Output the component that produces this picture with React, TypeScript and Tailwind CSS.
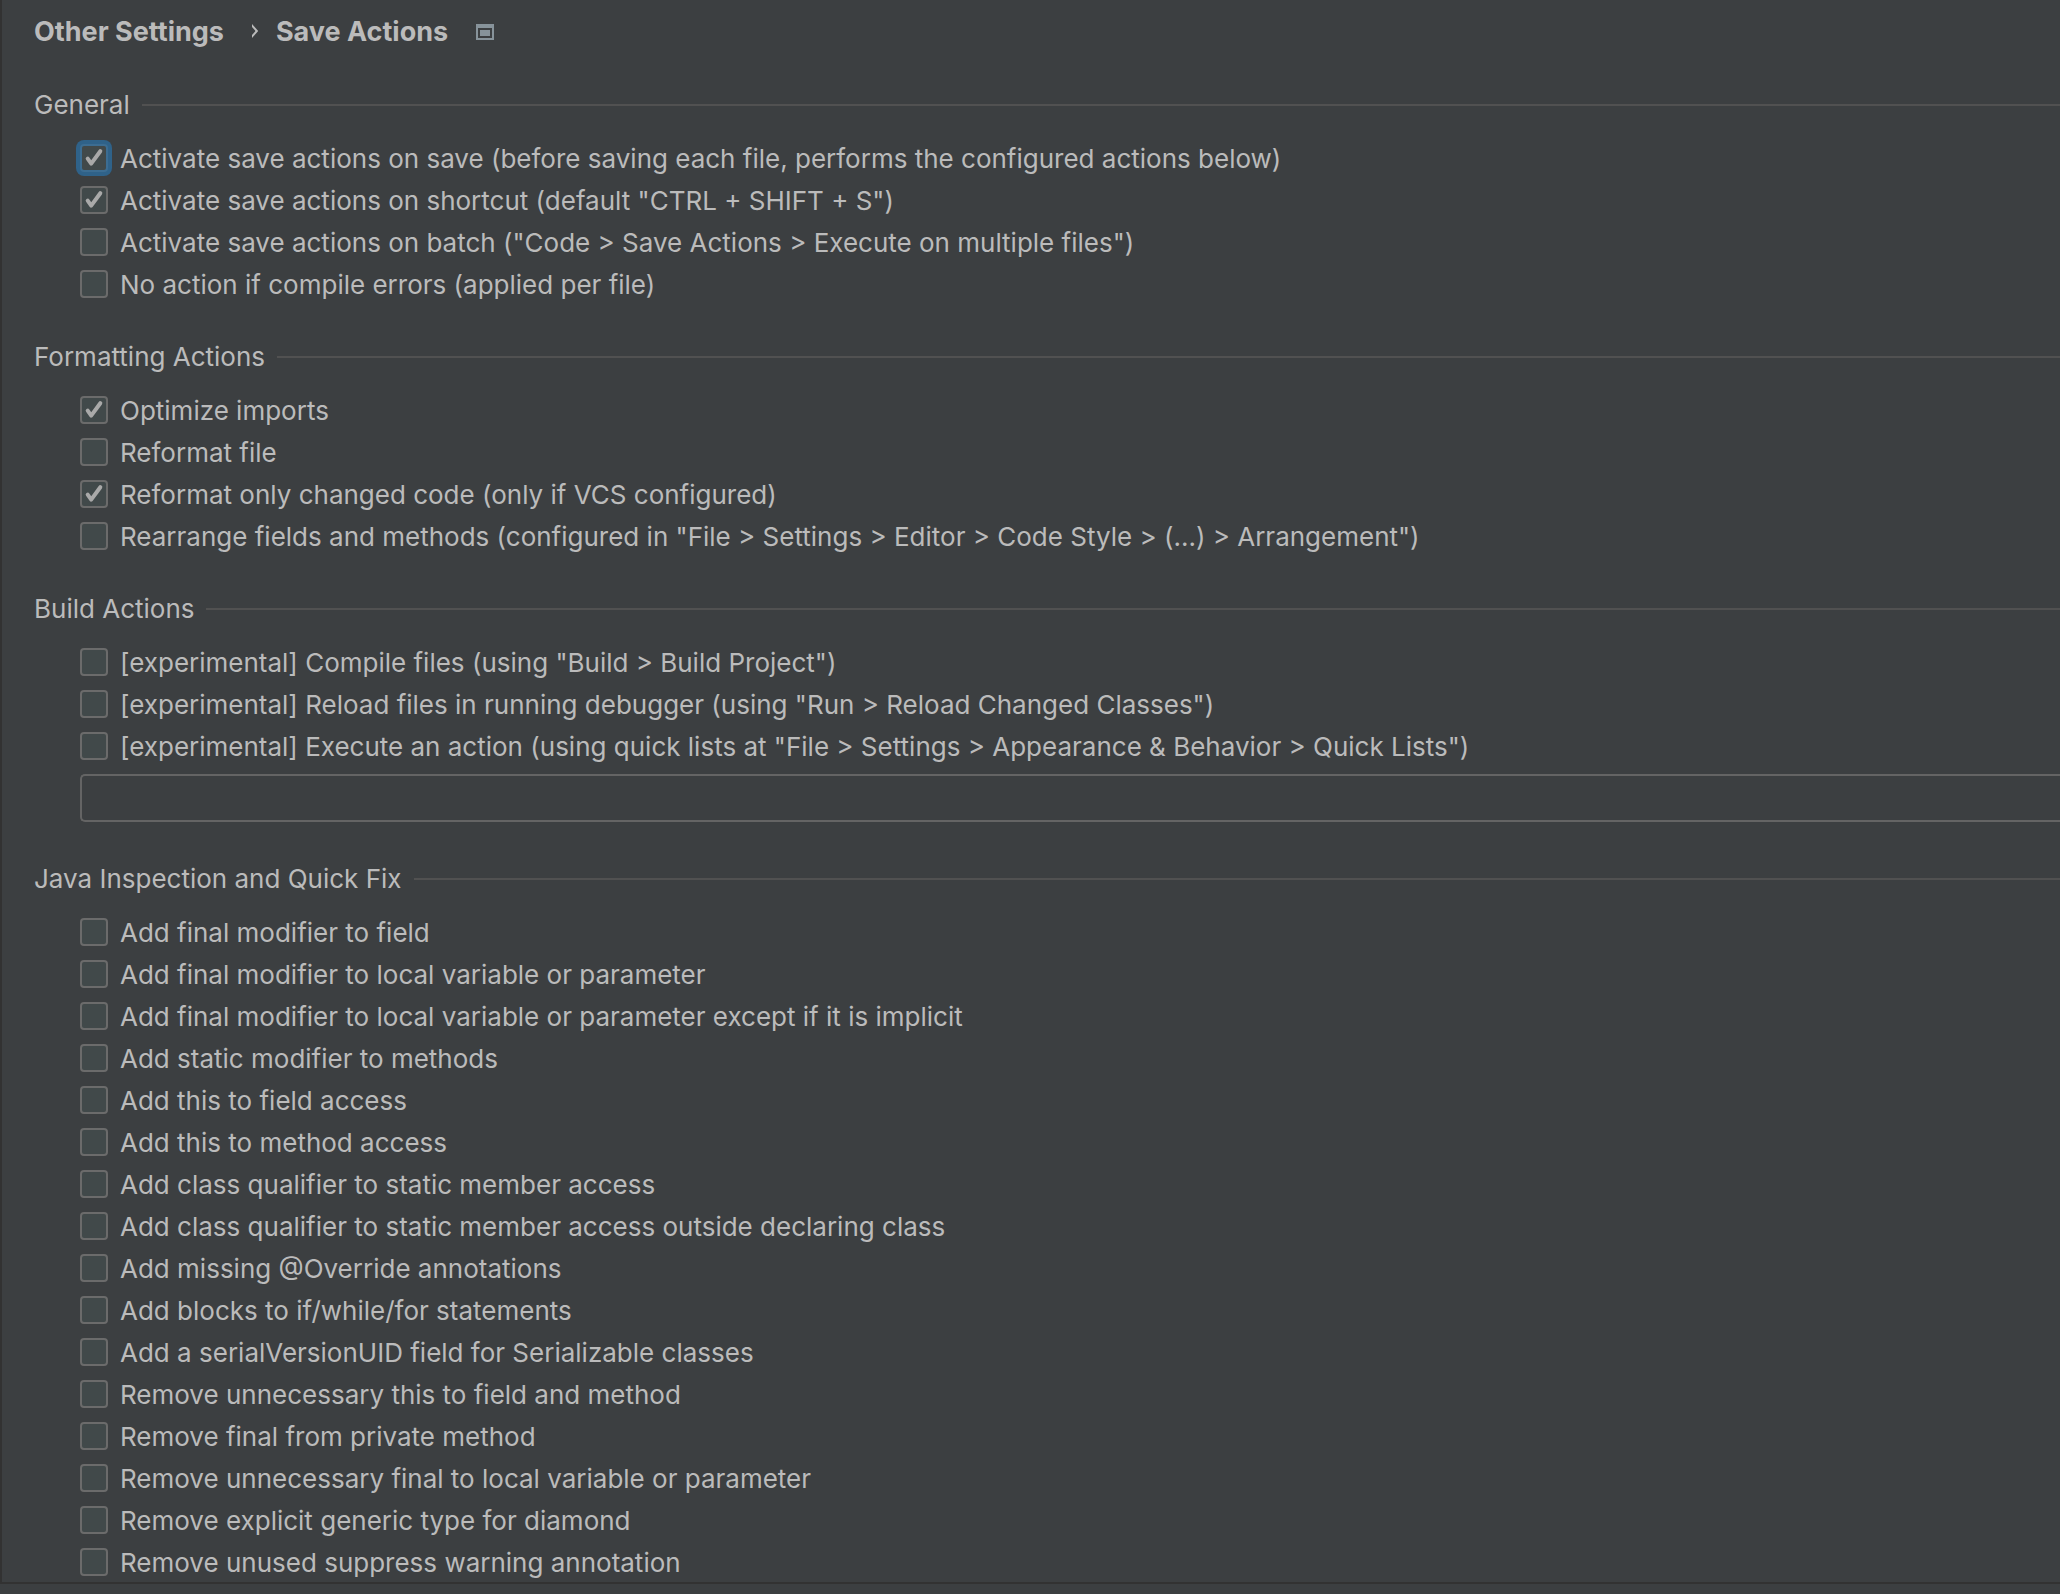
interface Option {
  label: string
  checked?: boolean
  focused?: boolean
}

interface Section {
  id: string
  title: string
  options: Option[]
  hasQuickList?: boolean
}

const sections: Section[] = [
  {
    id: "general",
    title: "General",
    options: [
      { label: "Activate save actions on save (before saving each file, performs the configured actions below)", checked: true, focused: true },
      { label: 'Activate save actions on shortcut (default "CTRL + SHIFT + S")', checked: true },
      { label: 'Activate save actions on batch ("Code > Save Actions > Execute on multiple files")' },
      { label: "No action if compile errors (applied per file)" },
    ],
  },
  {
    id: "formatting",
    title: "Formatting Actions",
    options: [
      { label: "Optimize imports", checked: true },
      { label: "Reformat file" },
      { label: "Reformat only changed code (only if VCS configured)", checked: true },
      { label: 'Rearrange fields and methods (configured in "File > Settings > Editor > Code Style > (...) > Arrangement")' },
    ],
  },
  {
    id: "build",
    title: "Build Actions",
    hasQuickList: true,
    options: [
      { label: '[experimental] Compile files (using "Build > Build Project")' },
      { label: '[experimental] Reload files in running debugger (using "Run > Reload Changed Classes")' },
      { label: '[experimental] Execute an action (using quick lists at "File > Settings > Appearance & Behavior > Quick Lists")' },
    ],
  },
  {
    id: "java",
    title: "Java Inspection and Quick Fix",
    options: [
      { label: "Add final modifier to field" },
      { label: "Add final modifier to local variable or parameter" },
      { label: "Add final modifier to local variable or parameter except if it is implicit" },
      { label: "Add static modifier to methods" },
      { label: "Add this to field access" },
      { label: "Add this to method access" },
      { label: "Add class qualifier to static member access" },
      { label: "Add class qualifier to static member access outside declaring class" },
      { label: "Add missing @Override annotations" },
      { label: "Add blocks to if/while/for statements" },
      { label: "Add a serialVersionUID field for Serializable classes" },
      { label: "Remove unnecessary this to field and method" },
      { label: "Remove final from private method" },
      { label: "Remove unnecessary final to local variable or parameter" },
      { label: "Remove explicit generic type for diamond" },
      { label: "Remove unused suppress warning annotation" },
    ],
  },
]

function CheckRow({ id, option }: { id: string; option: Option }) {
  return (
    <div className="flex items-start gap-3 pt-2 pb-1">
      <span className="relative size-7 shrink-0">
        <input
          id={id}
          type="checkbox"
          defaultChecked={option.checked}
          autoFocus={option.focused}
          className="peer block size-7 appearance-none rounded-[4px] border-2 border-[#6b6b6b] bg-[#41494a] outline-none focus:border-[#3c6d92] focus:ring-4 focus:ring-[#2f6289]"
        />
        <svg
          viewBox="0 0 28 28"
          className="pointer-events-none absolute inset-0 hidden size-7 peer-checked:block"
          fill="none"
          stroke="#a9a9a9"
          strokeWidth="4"
          strokeLinecap="round"
          strokeLinejoin="round"
        >
          <path d="M7.7 14.7 11.2 19.6 20.3 7.2" />
        </svg>
      </span>
      <label htmlFor={id} className="leading-[30px]">
        {option.label}
      </label>
    </div>
  )
}

function SettingsSection({ section }: { section: Section }) {
  return (
    <section>
      <div className="mb-3.5 flex items-center gap-3">
        <h2 className="leading-[34px]">{section.title}</h2>
        <div className="h-0.5 flex-1 bg-[#515151]" />
      </div>
      <div className="pl-[46px]">
        {section.options.map((option, i) => (
          <CheckRow key={option.label} id={`${section.id}-${i}`} option={option} />
        ))}
        {section.hasQuickList && (
          <input
            type="text"
            aria-label="Quick list"
            disabled
            className="mt-2 mb-1 block h-12 w-full rounded-l-[5px] border-2 border-r-0 border-[#646464] bg-transparent px-3"
          />
        )}
      </div>
    </section>
  )
}

export default function App() {
  return (
    <div className="min-h-screen bg-[#3c3f41] font-['Inter','Liberation_Sans',sans-serif] text-[26px] text-[#bbbbbb]">
      <main className="border-b-2 border-l-2 border-[#323232] pl-8">
        <header className="flex h-[88px] items-start pt-3.5">
          <nav className="flex items-center text-[27px] leading-9 font-bold">
            <a href="#other-settings">Other Settings</a>
            <svg viewBox="0 0 6 16" className="mr-[18px] ml-7 h-4 w-1.5" fill="none" stroke="#bbbbbb" strokeWidth="2">
              <path d="M-1 0.500 4.800 7 -1 13.500" />
            </svg>
            <a href="#save-actions">Save Actions</a>
          </nav>
          <svg viewBox="0 0 18 16" className="mt-2.5 ml-7 h-4 w-[18px]">
            <path fill="#87939a" fillRule="evenodd" d="M0 0H18V16H0ZM2 4V14H16V4Z" />
            <path fill="#87939a" d="M4 6H14V12H4Z" />
          </svg>
        </header>
        <div className="flex flex-col gap-9">
          {sections.map((section) => (
            <SettingsSection key={section.id} section={section} />
          ))}
        </div>
      </main>
    </div>
  )
}
